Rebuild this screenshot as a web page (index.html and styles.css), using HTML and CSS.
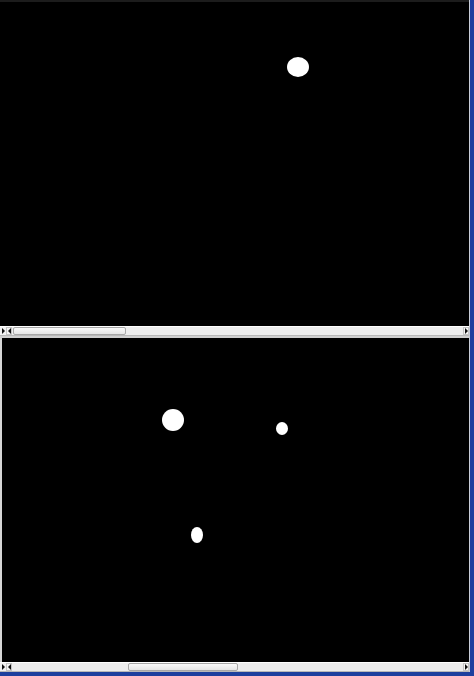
FILE: index.html
```html
<!DOCTYPE html>
<html>
<head>
<meta charset="utf-8">
<link rel="stylesheet" href="styles.css">
</head>
<body>
<div class="app">
  <div class="frame">
    <div class="topstrip"></div>
    <div class="panel">
      <div class="canvas">
        <div class="blob" style="left:287px;top:55px;width:22px;height:20px"></div>
      </div>
      <div class="scrollbar">
        <div class="btn"><span class="tri-r"></span></div>
        <div class="btn boxed"><span class="tri-l"></span></div>
        <div class="track">
          <div class="thumb" style="margin-left:0;width:113px"></div>
        </div>
        <div class="btn boxed"><span class="tri-r"></span></div>
      </div>
    </div>
    <div class="sep"></div>
    <div class="panel">
      <div class="canvas inset">
        <div class="blob" style="left:160px;top:71px;width:22px;height:22px"></div>
        <div class="blob" style="left:274px;top:84px;width:12px;height:13px"></div>
        <div class="blob" style="left:189px;top:189px;width:12px;height:16px"></div>
      </div>
      <div class="scrollbar">
        <div class="btn"><span class="tri-r"></span></div>
        <div class="btn boxed"><span class="tri-l"></span></div>
        <div class="track">
          <div class="thumb" style="margin-left:115px;width:110px"></div>
        </div>
        <div class="btn boxed"><span class="tri-r"></span></div>
      </div>
    </div>
  </div>
  <div class="edge"></div>
</div>
</body>
</html>
```
FILE: styles.css
```css
html, body {
  margin: 0;
  padding: 0;
  background: #1d3f9e;
  font-family: "Liberation Sans", Arial, sans-serif;
}
.app {
  display: flex;
  align-items: flex-start;
  width: 474px;
  height: 676px;
  background: #1d3f9e;
  overflow: hidden;
}
.frame {
  width: 469px;
  height: 672px;
  display: flex;
  flex-direction: column;
  background: #d6d6d6;
  border-right: 1px solid #c9cdd8;
}
.edge {
  flex: 1;
}
.topstrip {
  height: 2px;
  background: #1c1c1c;
}
.panel {
  display: flex;
  flex-direction: column;
}
.canvas {
  position: relative;
  height: 324px;
  background: #000;
}
.canvas.inset {
  margin-left: 2px;
}
.blob {
  position: absolute;
  background: #fff;
  border-radius: 50%;
}
.scrollbar {
  height: 10px;
  box-sizing: border-box;
  display: flex;
  align-items: stretch;
  background: #f2f2f2;
  border-top: 1px solid #fff;
  border-bottom: 1px solid #b8b8b8;
}
.btn {
  width: 6px;
  display: flex;
  align-items: center;
  justify-content: center;
  box-sizing: border-box;
}
.btn.boxed {
  border: 1px solid #c4c4c4;
  background: #f6f6f6;
}
.tri-r {
  width: 0;
  height: 0;
  border-top: 3px solid transparent;
  border-bottom: 3px solid transparent;
  border-left: 3px solid #111;
}
.tri-l {
  width: 0;
  height: 0;
  border-top: 3px solid transparent;
  border-bottom: 3px solid transparent;
  border-right: 3px solid #111;
}
.track {
  flex: 1;
  display: flex;
  padding-left: 1px;
  background: #ededed;
}
.thumb {
  box-sizing: border-box;
  background: linear-gradient(#fafafa, #e6e6e6);
  border: 1px solid #a8a8a8;
  border-radius: 2px;
}
.sep {
  height: 2px;
  background: #cfcfcf;
}
```
